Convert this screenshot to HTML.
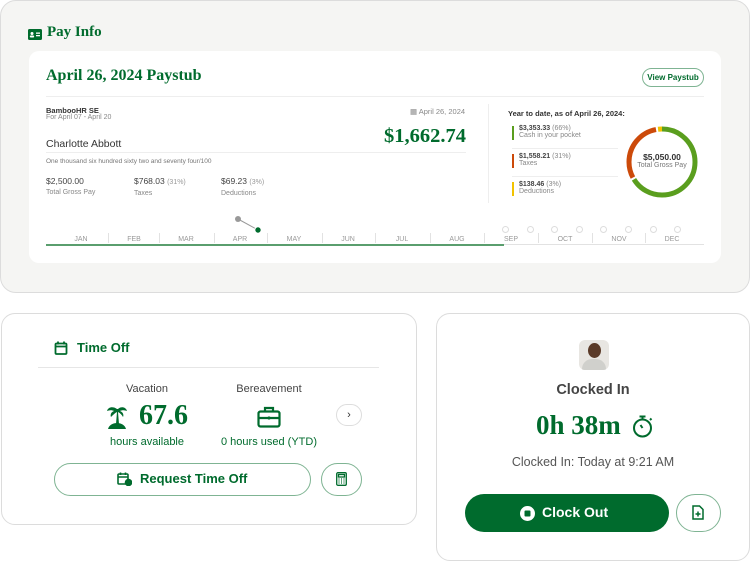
<!DOCTYPE html>
<html><head><meta charset="utf-8"><style>
*{box-sizing:border-box;margin:0;padding:0}
body{width:750px;height:561px;background:#fff;font-family:"Liberation Sans",sans-serif;position:relative;overflow:hidden;color:#333}
.abs{position:absolute}
.g{color:#006b2d}
.serif{font-family:"Liberation Serif",serif;font-weight:bold}
.month{position:absolute;top:236px;font-size:7px;color:#999;width:50px;text-align:center}
.sep{position:absolute;top:233px;width:1px;height:10px;background:#e2e2e2}
.circ{position:absolute;top:226px;width:7px;height:7px;border:1px solid #ddd;border-radius:50%;background:#fff}
</style></head><body>
<div class="abs" style="left:0;top:0;width:750px;height:293px;background:#f5f5f3;border:1px solid #dcdcdc;border-radius:16px"></div>
<svg class="abs" style="left:28px;top:29px" width="14" height="11" viewBox="0 0 14 11"><rect width="14" height="11" rx="1.5" fill="#006b2d"/><circle cx="4" cy="4.5" r="1.5" fill="#fff"/><rect x="1.8" y="6.5" width="4.4" height="2" rx="1" fill="#fff"/><rect x="8" y="3.5" width="4" height="1.3" fill="#fff"/><rect x="8" y="6" width="4" height="1.3" fill="#fff"/></svg>
<div class="abs serif g" style="left:47px;top:24px;font-size:15px">Pay Info</div>
<div class="abs" style="left:29px;top:51px;width:692px;height:212px;background:#fff;border-radius:10px"></div>
<div class="abs serif g" style="left:46px;top:67px;font-size:16px">April 26, 2024 Paystub</div>
<div class="abs g" style="left:642px;top:68px;width:62px;height:19px;border:1px solid #7fb493;border-radius:10px;font-size:8px;font-weight:bold;text-align:center;line-height:17px">View Paystub</div>
<div class="abs" style="left:46px;top:96px;width:658px;height:1px;background:#eee"></div>
<div class="abs" style="left:488px;top:104px;width:1px;height:99px;background:#eee"></div>
<div class="abs" style="left:46px;top:106px;font-size:7.5px;font-weight:bold;color:#333">BambooHR SE</div>
<div class="abs" style="left:46px;top:114px;font-size:7px;color:#888">For April 07 - April 20</div>
<div class="abs" style="left:410px;top:107px;font-size:7.5px;color:#888">▦ April 26, 2024</div>
<div class="abs" style="left:46px;top:138px;font-size:10.5px;color:#333">Charlotte Abbott</div>
<div class="abs serif g" style="left:350px;top:125px;width:116px;text-align:right;font-size:20.5px">$1,662.74</div>
<div class="abs" style="left:46px;top:152px;width:420px;height:1px;background:#eee"></div>
<div class="abs" style="left:46px;top:158px;font-size:6.5px;color:#777">One thousand six hundred sixty two and seventy four/100</div>
<div class="abs" style="left:46px;top:176px;font-size:8.5px;color:#444">$2,500.00</div>
<div class="abs" style="left:46px;top:189px;font-size:7px;color:#888">Total Gross Pay</div>
<div class="abs" style="left:134px;top:176px;font-size:8.5px;color:#444">$768.03 <span style="color:#999;font-size:7px">(31%)</span></div>
<div class="abs" style="left:134px;top:190px;font-size:7px;color:#888">Taxes</div>
<div class="abs" style="left:221px;top:176px;font-size:8.5px;color:#444">$69.23 <span style="color:#999;font-size:7px">(3%)</span></div>
<div class="abs" style="left:221px;top:190px;font-size:7px;color:#888">Deductions</div>
<div class="abs" style="left:508px;top:109px;font-size:7.5px;font-weight:bold;color:#333">Year to date, as of April 26, 2024:</div>
<div class="abs" style="left:512px;top:126px;width:2px;height:14px;background:#5a9e1e"></div>
<div class="abs" style="left:519px;top:125px;font-size:7px;color:#444"><b>$3,353.33</b> <span style="color:#888">(66%)</span><br><span style="color:#888">Cash in your pocket</span></div>
<div class="abs" style="left:512px;top:148px;width:106px;height:1px;background:#eee"></div>
<div class="abs" style="left:512px;top:154px;width:2px;height:14px;background:#cc4a0a"></div>
<div class="abs" style="left:519px;top:153px;font-size:7px;color:#444"><b>$1,558.21</b> <span style="color:#888">(31%)</span><br><span style="color:#888">Taxes</span></div>
<div class="abs" style="left:512px;top:176px;width:106px;height:1px;background:#eee"></div>
<div class="abs" style="left:512px;top:182px;width:2px;height:14px;background:#f2c300"></div>
<div class="abs" style="left:519px;top:181px;font-size:7px;color:#444"><b>$138.46</b> <span style="color:#888">(3%)</span><br><span style="color:#888">Deductions</span></div>
<svg class="abs" style="left:626px;top:126px" width="72" height="72" viewBox="0 0 72 72">
<g transform="rotate(-90 36 36)" fill="none" stroke-width="5">
<circle cx="36" cy="36" r="33" stroke="#5a9e1e" stroke-dasharray="137 207.3" stroke-dashoffset="0"/>
<circle cx="36" cy="36" r="33" stroke="#cc4a0a" stroke-dasharray="62 207.3" stroke-dashoffset="-139"/>
<circle cx="36" cy="36" r="33" stroke="#f2c300" stroke-dasharray="4 207.3" stroke-dashoffset="-203"/>
</g></svg>
<div class="abs" style="left:626px;top:152px;width:72px;text-align:center;font-size:8.5px;font-weight:bold;color:#333">$5,050.00</div>
<div class="abs" style="left:626px;top:162px;width:72px;text-align:center;font-size:7px;color:#777">Total Gross Pay</div>
<div class="abs" style="left:46px;top:244px;width:458px;height:1.5px;background:#5a9e6e"></div>
<div class="abs" style="left:504px;top:244px;width:200px;height:1px;background:#e2e2e2"></div>
<div class="month" style="left:56px">JAN</div><div class="sep" style="left:108px"></div>
<div class="month" style="left:109px">FEB</div><div class="sep" style="left:159px"></div>
<div class="month" style="left:161px">MAR</div><div class="sep" style="left:214px"></div>
<div class="month" style="left:215px">APR</div><div class="sep" style="left:267px"></div>
<div class="month" style="left:269px">MAY</div><div class="sep" style="left:322px"></div>
<div class="month" style="left:323px">JUN</div><div class="sep" style="left:375px"></div>
<div class="month" style="left:377px">JUL</div><div class="sep" style="left:430px"></div>
<div class="month" style="left:432px">AUG</div><div class="sep" style="left:484px"></div>
<div class="month" style="left:486px">SEP</div><div class="sep" style="left:538px"></div>
<div class="month" style="left:540px">OCT</div><div class="sep" style="left:592px"></div>
<div class="month" style="left:594px">NOV</div><div class="sep" style="left:645px"></div>
<div class="month" style="left:647px">DEC</div>
<div class="circ" style="left:502px"></div><div class="circ" style="left:527px"></div><div class="circ" style="left:551px"></div><div class="circ" style="left:576px"></div><div class="circ" style="left:600px"></div><div class="circ" style="left:625px"></div><div class="circ" style="left:650px"></div><div class="circ" style="left:674px"></div>
<svg class="abs" style="left:232px;top:213px" width="32" height="22"><line x1="6" y1="6" x2="26" y2="17" stroke="#999" stroke-width="1"/><circle cx="6" cy="6" r="3" fill="#999"/><circle cx="26" cy="17" r="3.2" fill="#006b2d" stroke="#fff" stroke-width="1"/></svg>
<div class="abs" style="left:1px;top:313px;width:416px;height:212px;border:1px solid #dcdcdc;border-radius:14px"></div>
<svg class="abs" style="left:54px;top:341px" width="14" height="14" viewBox="0 0 14 14" fill="none" stroke="#006b2d" stroke-width="1.8"><rect x="1.5" y="2.5" width="11" height="10.5" rx="1"/><path d="M1.5 5.5h11M4 0.5v3M10 0.5v3"/></svg>
<div class="abs g" style="left:77px;top:340px;font-size:13px;font-weight:bold">Time Off</div>
<div class="abs" style="left:38px;top:367px;width:341px;height:1px;background:#e6e6e6"></div>
<div class="abs" style="left:97px;top:383px;width:100px;text-align:center;font-size:11px;color:#444">Vacation</div>
<div class="abs" style="left:219px;top:383px;width:100px;text-align:center;font-size:11px;color:#444">Bereavement</div>
<svg class="abs" style="left:106px;top:405px" width="22" height="25" viewBox="0 0 22 25" fill="#006b2d"><path d="M11 4C7 1 2 2 1 6c3-1 5-1 7 0C5 7 4 10 5 12c2-2 4-4 6-5l-1 12h3l-1-12c2 1 4 3 5 5 1-2 0-5-3-6 2-1 4-1 7 0-1-4-6-5-9-2z"/><path d="M2 24c1-4 5-6 9-6s8 2 9 6z"/></svg>
<div class="abs serif g" style="left:139px;top:400px;font-size:28px">67.6</div>
<div class="abs g" style="left:97px;top:436px;width:100px;text-align:center;font-size:11px">hours available</div>
<svg class="abs" style="left:257px;top:406px" width="24" height="22" viewBox="0 0 24 22" fill="none" stroke="#006b2d" stroke-width="2.2"><rect x="1.5" y="5.5" width="21" height="15" rx="2"/><path d="M8 5.5V2h8v3.5M1.5 12h21M12 10.5v3"/></svg>
<div class="abs g" style="left:209px;top:436px;width:120px;text-align:center;font-size:11px">0 hours used (YTD)</div>
<div class="abs" style="left:336px;top:404px;width:26px;height:22px;border:1px solid #ddd;border-radius:11px;text-align:center;font-size:11px;line-height:20px;color:#333">›</div>
<div class="abs" style="left:54px;top:463px;width:257px;height:33px;border:1px solid #7fb493;border-radius:17px"></div>
<svg class="abs" style="left:117px;top:472px" width="15" height="14" viewBox="0 0 15 14" fill="none" stroke="#006b2d" stroke-width="1.6"><rect x="1" y="2" width="10" height="10" rx="1"/><path d="M1 5h10M3.5 0.5v2.5M8.5 0.5v2.5"/><circle cx="11.5" cy="10.5" r="3" fill="#006b2d"/></svg>
<div class="abs g" style="left:140px;top:471px;font-size:13px;font-weight:bold">Request Time Off</div>
<div class="abs" style="left:321px;top:463px;width:41px;height:33px;border:1px solid #7fb493;border-radius:17px"></div>
<svg class="abs" style="left:336px;top:472px" width="11" height="14" viewBox="0 0 11 14" fill="none" stroke="#006b2d" stroke-width="1.3"><rect x="0.7" y="0.7" width="9.6" height="12.6" rx="1.2"/><rect x="2.5" y="2.5" width="6" height="2.5"/><path d="M2.5 7h1M5 7h1M7.5 7h1M2.5 9h1M5 9h1M7.5 9h1M2.5 11h1M5 11h1M7.5 11h1"/></svg>
<div class="abs" style="left:436px;top:313px;width:314px;height:248px;border:1px solid #dcdcdc;border-radius:14px"></div>
<div class="abs" style="left:579px;top:340px;width:30px;height:30px;border-radius:6px;background:#e8e6e2;overflow:hidden"><div class="abs" style="left:9px;top:3px;width:13px;height:15px;border-radius:50%;background:#5a3a28"></div><div class="abs" style="left:3px;top:19px;width:24px;height:14px;border-radius:10px 10px 0 0;background:#d0d0cc"></div></div>
<div class="abs" style="left:436px;top:382px;width:314px;text-align:center;font-size:14.5px;font-weight:bold;color:#444">Clocked In</div>
<div class="abs serif g" style="left:536px;top:410px;font-size:27px">0h 38m</div>
<svg class="abs" style="left:632px;top:415px" width="21" height="23" viewBox="0 0 21 23" fill="none" stroke="#006b2d" stroke-width="2"><circle cx="10.5" cy="13" r="8.5"/><path d="M7.5 1.5h6M10.5 1.5v3M10.5 13l-2-3M18 5l1.5-1.5"/></svg>
<div class="abs" style="left:436px;top:455px;width:314px;text-align:center;font-size:12.5px;color:#555">Clocked In: Today at 9:21 AM</div>
<div class="abs" style="left:465px;top:494px;width:204px;height:38px;background:#006b2d;border-radius:19px"></div>
<svg class="abs" style="left:520px;top:506px" width="15" height="15" viewBox="0 0 15 15"><circle cx="7.5" cy="7.5" r="7.5" fill="#fff"/><rect x="4.5" y="4.5" width="6" height="6" rx="1" fill="#006b2d"/></svg>
<div class="abs" style="left:542px;top:504px;font-size:14px;font-weight:bold;color:#fff">Clock Out</div>
<div class="abs" style="left:676px;top:494px;width:45px;height:38px;border:1px solid #7fb493;border-radius:19px"></div>
<svg class="abs" style="left:692px;top:505px" width="12" height="15" viewBox="0 0 12 15" fill="none" stroke="#006b2d" stroke-width="1.5"><path d="M1 1h6.5L11 4.5V14H1z"/><path d="M6 6.5v5M3.5 9h5"/></svg>
</body></html>
